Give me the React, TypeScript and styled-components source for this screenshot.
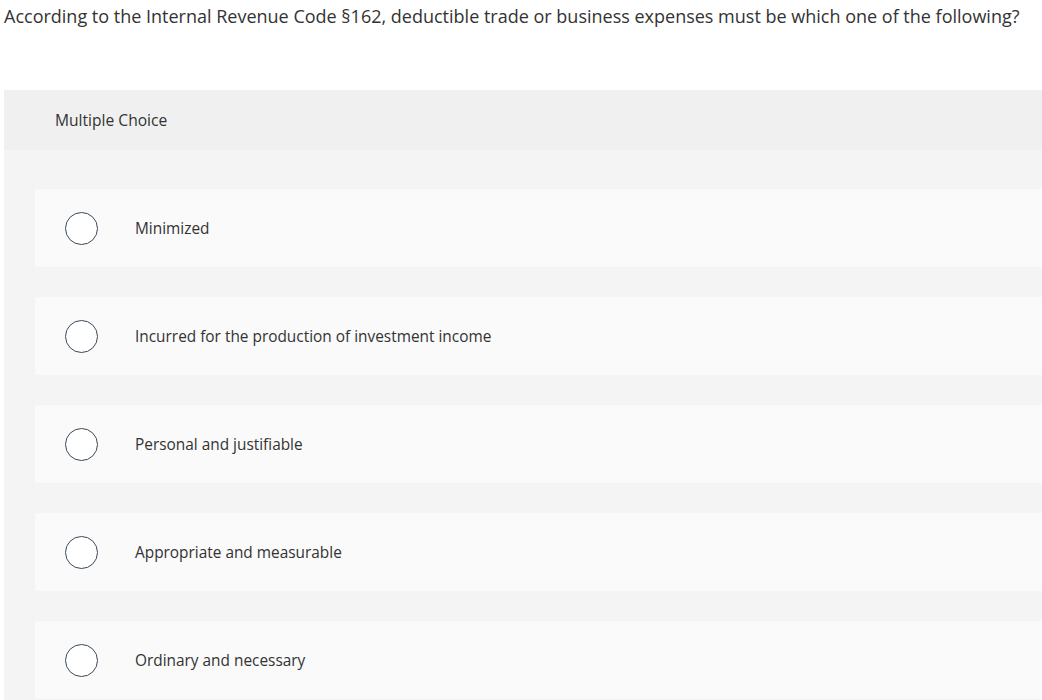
import React from "react";
import styled, { createGlobalStyle } from "styled-components";

const Global = createGlobalStyle`
  html, body { margin: 0; padding: 0; background: #ffffff; }
  body { font-family: "Open Sans", Lato, sans-serif; color: #333333; overflow: hidden; }
`;

const Page = styled.div`
  width: 1042px;
  height: 700px;
  overflow: hidden;
`;

const Question = styled.p`
  margin: 0;
  padding: 4px 0 0 4px;
  font-size: 18px;
  line-height: 25px;
  color: #333333;
  white-space: nowrap;
`;

const Panel = styled.section`
  margin: 61px 0 0 4px;
  background: #f4f4f4;
  padding-bottom: 40px;
`;

const PanelHeader = styled.div`
  height: 60px;
  background: #f0f0f0;
  display: flex;
  align-items: center;
  padding-left: 51px;
  font-size: 15.6px;
  color: #333333;
`;

const Options = styled.ul`
  list-style: none;
  margin: 0;
  padding: 39px 0 0 31px;
  display: flex;
  flex-direction: column;
  gap: 30px;
`;

const Option = styled.li`
  height: 78px;
  background: #fafafa;
  display: flex;
  align-items: center;
  padding-left: 30px;
`;

const Radio = styled.span`
  box-sizing: border-box;
  width: 33px;
  height: 33px;
  border-radius: 50%;
  border: 1.5px solid #3a4857;
  background: #ffffff;
  flex: none;
`;

const Label = styled.span`
  margin-left: 37px;
  font-size: 15.4px;
  color: #333333;
  line-height: 20px;
  padding-top: 1px;
`;

const choices = [
  "Minimized",
  "Incurred for the production of investment income",
  "Personal and justifiable",
  "Appropriate and measurable",
  "Ordinary and necessary",
];

export default function App() {
  return (
    <Page>
      <Global />
      <Question>
        According to the Internal Revenue Code §162, deductible trade or business expenses must be which one of the following?
      </Question>
      <Panel>
        <PanelHeader>Multiple Choice</PanelHeader>
        <Options>
          {choices.map((c) => (
            <Option key={c}>
              <Radio />
              <Label>{c}</Label>
            </Option>
          ))}
        </Options>
      </Panel>
    </Page>
  );
}
